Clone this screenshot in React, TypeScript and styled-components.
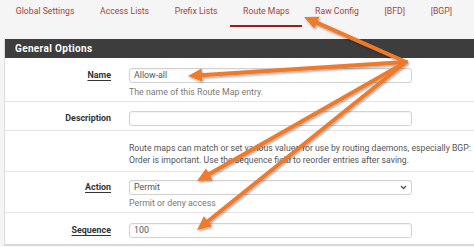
import React from "react";
import styled, { createGlobalStyle } from "styled-components";

const Global = createGlobalStyle`
  html, body { margin: 0; padding: 0; }
  body {
    width: 474px; height: 247px; overflow: hidden;
    background: #f5f5f5;
    font-family: Roboto, "Liberation Sans", sans-serif;
  }
`;

const Page = styled.div`
  position: relative;
  width: 474px;
  height: 247px;
  overflow: hidden;
`;

const Nav = styled.nav`
  display: flex;
  height: 39px;
  padding-left: 3px;
  align-items: flex-start;
`;

const Tab = styled.div<{ $active?: boolean }>`
  padding: 5px 12.8px 0;
  height: 20px;
  font-size: 8.7px;
  line-height: 12px;
  color: #a9433b;
  white-space: nowrap;
  border-bottom: 2px solid ${(p) => (p.$active ? "#9d1d1d" : "transparent")};
`;

const Panel = styled.section`
  margin-left: 4px;
  margin-right: -20px;
  background: #fff;
  border: 1px solid #dcdcdc;
  border-top: none;
`;

const PanelHeader = styled.h2`
  margin: 0;
  height: 19px;
  background: #3d3d3d;
  color: #fff;
  font-size: 10px;
  font-weight: 700;
  line-height: 19px;
  padding-left: 10px;
  letter-spacing: 0.35px;
`;

const Row = styled.div<{ $pt: number; $pb: number; $last?: boolean }>`
  display: grid;
  grid-template-columns: 106px 283px;
  column-gap: 18px;
  padding: ${(p) => p.$pt}px 0 ${(p) => p.$pb}px;
  border-bottom: 1px solid ${(p) => (p.$last ? "#d5d5d5" : "#e6e6e6")};
`;

const Label = styled.div<{ $underline?: boolean }>`
  text-align: right;
  font-size: 8.9px;
  font-weight: 700;
  color: #333;
  line-height: 15px;
  text-decoration: ${(p) => (p.$underline ? "underline" : "none")};
  text-underline-offset: 2px;
`;

const Field = styled.div`
  grid-column: 2;
`;

const InputBox = styled.div`
  box-sizing: border-box;
  height: 15px;
  border: 1px solid #d2d2d2;
  border-radius: 3px;
  box-shadow: inset 0 1px 1px rgba(0, 0, 0, 0.05);
  font-size: 8.8px;
  color: #555;
  line-height: 13px;
  padding: 0 4px;
  display: flex;
  align-items: center;
  justify-content: space-between;
`;

const Help = styled.div<{ $mt?: number }>`
  margin-top: ${(p) => p.$mt ?? 3}px;
  font-size: 8.8px;
  line-height: 12px;
  color: #7a7a7a;
  white-space: nowrap;
`;

const Text = styled.div`
  font-size: 8.7px;
  line-height: 12px;
  color: #555;
  white-space: nowrap;
`;

const Overlay = styled.svg`
  position: absolute;
  left: 0;
  top: 0;
  pointer-events: none;
`;

const ORIGIN = { x: 406, y: 62 };
const TIPS = [
  { x: 304, y: 17 },
  { x: 188, y: 76 },
  { x: 197, y: 181 },
  { x: 197, y: 230 },
];

function Arrow({ tx, ty }: { tx: number; ty: number }) {
  const dx = tx - ORIGIN.x;
  const dy = ty - ORIGIN.y;
  const len = Math.hypot(dx, dy);
  const ux = dx / len;
  const uy = dy / len;
  const L = 14;
  const W = 6.5;
  const bx = tx - ux * L;
  const by = ty - uy * L;
  const nx = -uy;
  const ny = ux;
  return (
    <g>
      <line x1={ORIGIN.x} y1={ORIGIN.y} x2={bx + ux * 2} y2={by + uy * 2} stroke="#ee7a2c" strokeWidth={4} strokeLinecap="round" />
      <polygon
        points={`${tx},${ty} ${bx + nx * W},${by + ny * W} ${bx - nx * W},${by - ny * W}`}
        fill="#ee7a2c"
      />
    </g>
  );
}

function Chevron() {
  return (
    <svg width="7" height="5" viewBox="0 0 7 5">
      <path d="M1 1 L3.5 3.5 L6 1" fill="none" stroke="#555" strokeWidth="1.3" />
    </svg>
  );
}

export default function App() {
  const tabs = ["Global Settings", "Access Lists", "Prefix Lists", "Route Maps", "Raw Config", "[BFD]", "[BGP]"];
  return (
    <Page>
      <Global />
      <Nav>
        {tabs.map((t) => (
          <Tab key={t} $active={t === "Route Maps"}>
            {t}
          </Tab>
        ))}
      </Nav>
      <Panel>
        <PanelHeader>General Options</PanelHeader>
        <Row $pt={10} $pb={3}>
          <Label $underline>Name</Label>
          <Field>
            <InputBox>Allow-all</InputBox>
            <Help>The name of this Route Map entry.</Help>
          </Field>
        </Row>
        <Row $pt={9} $pb={4}>
          <Label>Description</Label>
          <Field>
            <InputBox />
          </Field>
        </Row>
        <Row $pt={11} $pb={5}>
          <Field>
            <Text>Route maps can match or set various values for use by routing daemons, especially BGP:</Text>
            <Text>Order is important. Use the sequence field to reorder entries after saving.</Text>
          </Field>
        </Row>
        <Row $pt={8} $pb={3}>
          <Label $underline>Action</Label>
          <Field>
            <InputBox>
              <span>Permit</span>
              <Chevron />
            </InputBox>
            <Help $mt={2}>Permit or deny access</Help>
          </Field>
        </Row>
        <Row $pt={10} $pb={6} $last>
          <Label $underline>Sequence</Label>
          <Field>
            <InputBox>100</InputBox>
          </Field>
        </Row>
      </Panel>
      <Overlay width={474} height={247} viewBox="0 0 474 247">
        <defs>
          <filter id="sh" x="-10%" y="-10%" width="120%" height="120%">
            <feDropShadow dx="1" dy="1.5" stdDeviation="1" floodColor="#000" floodOpacity="0.35" />
          </filter>
        </defs>
        <g filter="url(#sh)">
          {TIPS.map((t, i) => (
            <Arrow key={i} tx={t.x} ty={t.y} />
          ))}
        </g>
      </Overlay>
    </Page>
  );
}
